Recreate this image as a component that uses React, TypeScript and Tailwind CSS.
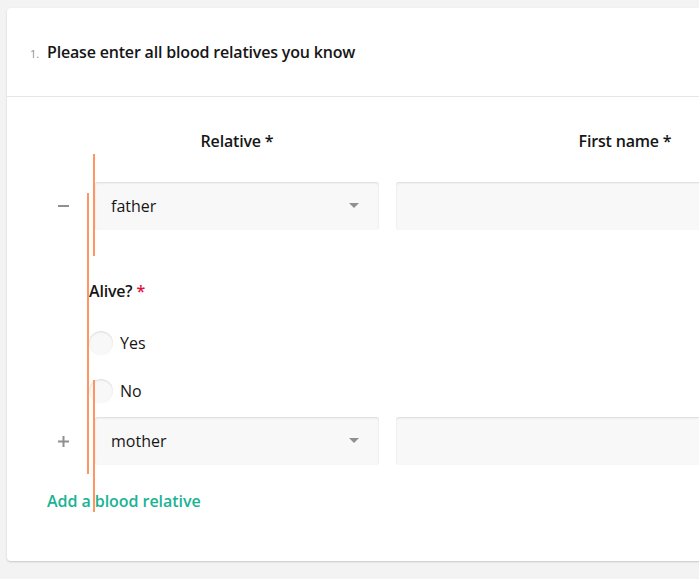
const font = { fontFamily: '"Open Sans", "Liberation Sans", sans-serif' };

const Chevron = () => (
  <svg width="10" height="6" viewBox="0 0 10 6" className="shrink-0">
    <path d="M0 0 L10 0 L5 5 Z" fill="#909090" />
  </svg>
);

const Dropdown = ({ value }: { value: string }) => (
  <div className="flex h-[48px] w-[284px] shrink-0 items-center justify-between rounded-[3px] bg-[#f8f8f8] pl-[16px] pr-[20px] text-[16px] text-[#161616] shadow-[inset_0_1px_2px_rgba(0,0,0,0.12)]">
    <span>{value}</span>
    <Chevron />
  </div>
);

const TextInput = () => (
  <div className="h-[48px] w-[458px] shrink-0 rounded-[3px] bg-[#f8f8f8] shadow-[inset_0_1px_2px_rgba(0,0,0,0.12)]" />
);

const Radio = ({ label }: { label: string }) => (
  <div className="flex h-[24px] items-center gap-[7px]">
    <span className="h-[24px] w-[24px] rounded-full bg-[#f8f8f8] shadow-[inset_0_1px_2px_rgba(0,0,0,0.12)]" />
    <span className="text-[16px] text-[#161616]">{label}</span>
  </div>
);

const Marker = ({ className }: { className: string }) => (
  <div className={`absolute w-[2px] bg-[#ff9560] ${className}`} />
);

export default function App() {
  return (
    <div className="relative h-[579px] w-[699px] overflow-hidden bg-[#f3f3f3]" style={font}>
      <div className="ml-[7px] mt-[8px] w-[900px] rounded-[4px] bg-white shadow-[0_1px_2px_rgba(0,0,0,0.18)]">
        <div className="flex items-baseline gap-[8px] px-[23px] pb-[32px] pt-[32px]">
          <span className="w-[9px] text-[11px] text-[#909090]">1.</span>
          <h3 className="text-[16px] font-semibold leading-[24px] tracking-[-0.18px] text-[#161616]">
            Please enter all blood relatives you know
          </h3>
        </div>
        <div className="h-px bg-[#e6e6e6]" />

        <div className="pb-[48px] pl-[40px] pt-[32px]">
          <div className="flex gap-[17px] pl-[48px] text-[16px] font-semibold leading-[24px] tracking-[-0.18px] text-[#161616]">
            <div className="w-[284px] text-center">Relative *</div>
            <div className="w-[458px] text-center">First name *</div>
          </div>

          <div className="mt-[29px] flex items-center gap-[16px]">
            <div className="flex w-[32px] justify-center">
              <span className="h-[2px] w-[11px] bg-[#909090]" />
            </div>
            <div className="flex gap-[17px]">
              <Dropdown value="father" />
              <TextInput />
            </div>
          </div>

          <div className="ml-[42px] pt-[49px]">
            <div className="text-[16px] font-semibold leading-[24px] tracking-[-0.18px] text-[#161616]">
              Alive?<span className="ml-[4px] text-[#e60a3e]">*</span>
            </div>
            <div className="mt-[28px] flex flex-col gap-[24px]">
              <Radio label="Yes" />
              <Radio label="No" />
            </div>
          </div>

          <div className="mt-[14px] flex items-center gap-[16px]">
            <div className="flex w-[32px] justify-center">
              <svg width="11" height="11" viewBox="0 0 11 11">
                <path d="M5.5 0 V11 M0 5.5 H11" stroke="#909090" strokeWidth="2" />
              </svg>
            </div>
            <div className="flex gap-[17px]">
              <Dropdown value="mother" />
              <TextInput />
            </div>
          </div>

          <div className="mt-[24px] text-[16px] font-semibold leading-[24px] tracking-[-0.05px] text-[#19b394]">
            Add a blood relative
          </div>
        </div>
      </div>

      <Marker className="left-[93px] top-[154px] h-[102px]" />
      <Marker className="left-[87px] top-[193px] h-[281px]" />
      <Marker className="left-[93px] top-[380px] h-[132px]" />
    </div>
  );
}
